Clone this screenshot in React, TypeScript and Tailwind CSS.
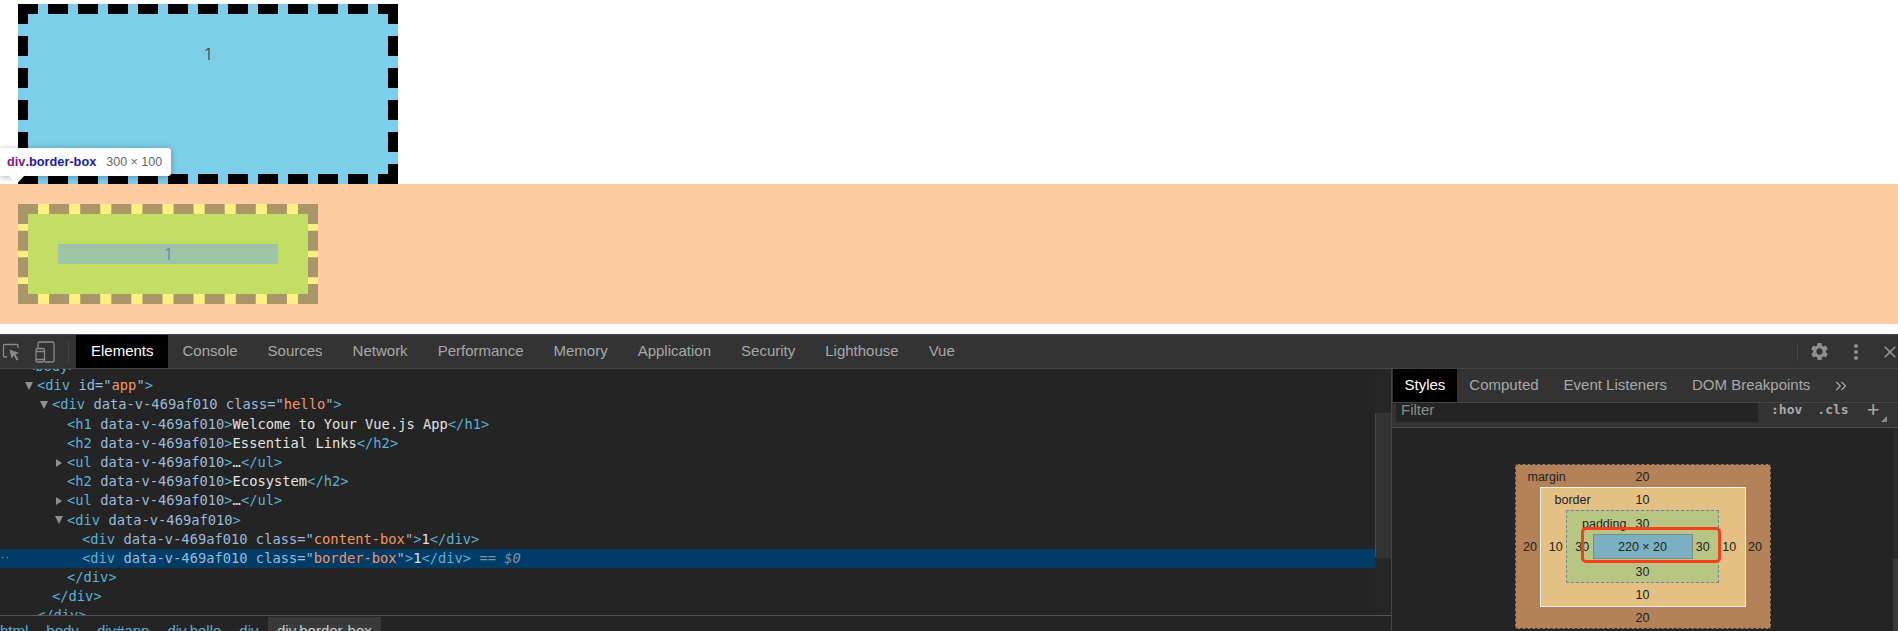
import React from "react";
import { ChevronsRight } from "lucide-react";
import { MdClose, MdMoreVert, MdSettings } from "react-icons/md";

type Token = ["t" | "a" | "v" | "x" | "m", string];

const tokenClass = {
  t: "text-[#5db0d7]",
  a: "text-[#9bbbdc]",
  v: "text-[#f29766]",
  x: "text-[#e3e3e3]",
  m: "text-[#7d8fa3] italic",
};

const ATTR = "data-v-469af010";

const rows: { pad: string; arrow?: "down" | "right"; selected?: boolean; tokens: Token[] }[] = [
  { pad: "pl-[27px]", tokens: [["t", "<body>"]] },
  { pad: "pl-[37px]", arrow: "down", tokens: [["t", "<div "], ["a", 'id="'], ["v", "app"], ["a", '"'], ["t", ">"]] },
  { pad: "pl-[52px]", arrow: "down", tokens: [["t", "<div "], ["a", `${ATTR} class="`], ["v", "hello"], ["a", '"'], ["t", ">"]] },
  { pad: "pl-[67px]", tokens: [["t", "<h1 "], ["a", ATTR], ["t", ">"], ["x", "Welcome to Your Vue.js App"], ["t", "</h1>"]] },
  { pad: "pl-[67px]", tokens: [["t", "<h2 "], ["a", ATTR], ["t", ">"], ["x", "Essential Links"], ["t", "</h2>"]] },
  { pad: "pl-[67px]", arrow: "right", tokens: [["t", "<ul "], ["a", ATTR], ["t", ">"], ["x", "…"], ["t", "</ul>"]] },
  { pad: "pl-[67px]", tokens: [["t", "<h2 "], ["a", ATTR], ["t", ">"], ["x", "Ecosystem"], ["t", "</h2>"]] },
  { pad: "pl-[67px]", arrow: "right", tokens: [["t", "<ul "], ["a", ATTR], ["t", ">"], ["x", "…"], ["t", "</ul>"]] },
  { pad: "pl-[67px]", arrow: "down", tokens: [["t", "<div "], ["a", ATTR], ["t", ">"]] },
  { pad: "pl-[82px]", tokens: [["t", "<div "], ["a", `${ATTR} class="`], ["v", "content-box"], ["a", '"'], ["t", ">"], ["x", "1"], ["t", "</div>"]] },
  { pad: "pl-[82px]", selected: true, tokens: [["t", "<div "], ["a", `${ATTR} class="`], ["v", "border-box"], ["a", '"'], ["t", ">"], ["x", "1"], ["t", "</div>"], ["m", " == $0"]] },
  { pad: "pl-[67px]", tokens: [["t", "</div>"]] },
  { pad: "pl-[52px]", tokens: [["t", "</div>"]] },
  { pad: "pl-[37px]", tokens: [["t", "</div>"]] },
];

const mainTabs = ["Console", "Sources", "Network", "Performance", "Memory", "Application", "Security", "Lighthouse", "Vue"];
const styleTabs = ["Computed", "Event Listeners", "DOM Breakpoints"];
const crumbs = ["html", "body", "div#app", "div.hello", "div"];

function Arrow({ dir }: { dir: "down" | "right" }) {
  return (
    <svg className="-ml-[12px] w-[12px] h-[10px] shrink-0" viewBox="0 0 12 10" fill="#8f8f8f">
      {dir === "down" ? <polygon points="0,1 8,1 4,9" /> : <polygon points="1,1 7,5 1,9" />}
    </svg>
  );
}

function InspectIcon() {
  return (
    <svg className="w-[20px] h-[20px]" viewBox="0 0 20 20" fill="none" stroke="#8a8a8a" strokeWidth="1.3">
      <path d="M7 15H4.5A1 1 0 0 1 3.5 14V3.5A1 1 0 0 1 4.5 2.5H17A1 1 0 0 1 18 3.5V6" />
      <path d="M9.5 7.5L19 11L15.5 12.5L18.5 17.5L16.5 18.5L14 13.5L11.5 16.5Z" fill="#8a8a8a" stroke="none" />
    </svg>
  );
}

function DeviceIcon() {
  return (
    <svg className="w-[20px] h-[22px]" viewBox="0 0 20 22" fill="none" stroke="#8a8a8a" strokeWidth="1.3">
      <path d="M3 7V2.5A1.5 1.5 0 0 1 4.5 1H17.5A1.5 1.5 0 0 1 19 2.5V19.5A1.5 1.5 0 0 1 17.5 21H9.5" />
      <rect x="1" y="7.5" width="8.5" height="13.5" rx="1.5" />
      <path d="M1 10.5H9.5M1 18.5H9.5" />
    </svg>
  );
}

// one nested layer of the box model diagram
function BoxLayer({
  className,
  labelClass,
  label,
  top,
  bottom,
  left,
  right,
  children,
}: {
  className: string;
  labelClass?: string;
  label?: string;
  top: string;
  bottom: string;
  left: string;
  right: string;
  children: React.ReactNode;
}) {
  return (
    <div className={`relative box-border flex flex-col ${className}`}>
      <div className="flex-1 pt-[2px] grid grid-cols-[1fr_auto_1fr] items-center">
        <span className={labelClass}>{label}</span>
        <span>{top}</span>
        <span />
      </div>
      <div className="flex items-center">
        <span className="flex-1 pl-[5px] text-center">{left}</span>
        {children}
        <span className="flex-1 pr-[5px] text-center">{right}</span>
      </div>
      <div className="flex-1 pt-[2px] flex items-center justify-center">{bottom}</div>
    </div>
  );
}

export default function App() {
  return (
    <div className="relative w-[1898px] h-[631px] overflow-hidden flex flex-col bg-white font-['Liberation_Sans',sans-serif]">
      {/* content-box */}
      <div className="h-[184px] pt-[4px] pl-[18px] overflow-hidden shrink-0">
        <div className="box-border w-[380px] h-[180px] border-[10px] border-dashed border-black bg-[#7dcee9] pt-[30px] text-center text-[16px] leading-[20px] font-light text-[#2c3e50] font-['Inter',sans-serif]">
          1
        </div>
      </div>

      {/* border-box with the inspect highlight on it */}
      <div className="h-[140px] py-[20px] pl-[18px] bg-[#fdcca2] shrink-0">
        <div className="box-border w-[300px] h-[100px] border-[10px] border-dashed border-[#ab9669] bg-[#ffee80]">
          <div className="h-full p-[30px] bg-[#c3de65]">
            <div className="h-[20px] bg-[#9cc4a6] text-center text-[16px] leading-[20px] font-light text-[#4f86b4] font-['Inter',sans-serif]">
              1
            </div>
          </div>
        </div>
      </div>

      <div className="h-[10px] shrink-0" />

      {/* tooltip */}
      <div className="absolute left-0 top-[148px] w-[171px] h-[28px] bg-white rounded-r-[3px] shadow-[0_1px_6px_rgba(0,0,0,0.3)] flex items-center pl-[7px] text-[12.75px] whitespace-pre">
        <span className="font-bold text-[#881280]">div</span>
        <span className="font-bold text-[#1a1aa6]">.border-box</span>
        <span className="ml-[10px] text-[12.5px] text-[#666666]">300 × 100</span>
      </div>
      <svg className="absolute left-[9px] top-[176px] w-[15px] h-[8px]" viewBox="0 0 15 8">
        <polygon points="0,0 15,0 7.5,8" fill="#ffffff" />
      </svg>

      {/* devtools */}
      <div className="flex-1 min-h-0 flex flex-col bg-[#242424]">
        <div className="h-[35px] shrink-0 box-border flex items-stretch bg-[#333333] border-t border-[#444444] border-b text-[15px] text-[#a8a8a8]">
          <div className="flex items-center gap-[15px] w-[76px]">
            <InspectIcon />
            <DeviceIcon />
            <div className="w-px h-[20px] -ml-[2px] bg-[#444444]" />
          </div>
          <div className="flex items-center pl-[15px] pr-[14px] bg-black text-white">Elements</div>
          {mainTabs.map((t) => (
            <div key={t} className="flex items-center px-[15px]">
              {t}
            </div>
          ))}
          <div className="ml-auto flex items-center">
            <div className="w-px h-[20px] bg-[#444444] mr-[11px]" />
            <MdSettings className="w-[21px] h-[21px] text-[#8f8f8f]" />
            <MdMoreVert className="w-[24px] h-[24px] ml-[14px] text-[#8f8f8f]" />
            <MdClose className="w-[20px] h-[20px] ml-[12px] -mr-[2px] text-[#8f8f8f]" />
          </div>
        </div>

        <div className="flex-1 min-h-0 flex">
          {/* elements panel */}
          <div className="w-[1392px] shrink-0 flex flex-col border-r border-[#444444]">
            <div className="flex-1 min-h-0 flex">
              <div className="flex-1 min-w-0 overflow-hidden font-['DejaVu_Sans_Mono',monospace] text-[13.75px] leading-[19.2px]">
                <div className="-mt-[12px]">
                  {rows.map((r, i) => (
                    <div
                      key={i}
                      className={`relative h-[19.2px] flex items-center whitespace-pre ${r.pad} ${r.selected ? "bg-[#003c66]" : ""}`}
                    >
                      {r.selected && <span className="absolute left-0 text-[8px] text-[#9a9a9a]">··</span>}
                      {r.arrow && <Arrow dir={r.arrow} />}
                      {r.tokens.map(([k, s], j) => (
                        <span key={j} className={tokenClass[k]}>
                          {s}
                        </span>
                      ))}
                    </div>
                  ))}
                </div>
              </div>
              <div className="w-[16px] shrink-0 bg-[#262626] pt-[44px]">
                <div className="h-[145px] bg-[#333333] border-l border-[#4a4a4a] rounded-l-[2px]" />
              </div>
            </div>
            <div className="h-[16px] shrink-0 box-border border-t border-[#555555] flex text-[15px] leading-[28px] overflow-hidden">
              <div className="flex -ml-[9px] pt-[1px]">
                {crumbs.map((c) => (
                  <span key={c} className="px-[9px] text-[#5db0d7]">
                    {c}
                  </span>
                ))}
                <span className="px-[9.5px] bg-[#3a3a3a] text-[#cfcfcf]">div.border-box</span>
              </div>
            </div>
          </div>

          {/* styles panel */}
          <div className="flex-1 min-w-0 flex flex-col">
            <div className="h-[34px] shrink-0 box-border flex items-stretch bg-[#333333] border-b border-[#444444] text-[15px] text-[#a8a8a8] pl-px">
              <div className="flex items-center px-[11.5px] bg-black text-white">Styles</div>
              {styleTabs.map((t) => (
                <div key={t} className="flex items-center px-[12.5px]">
                  {t}
                </div>
              ))}
              <div className="flex items-center ml-[9px]">
                <ChevronsRight className="w-[18px] h-[18px]" strokeWidth={1.5} />
              </div>
            </div>

            <div className="h-[25px] shrink-0 box-border flex bg-[#333333] border-b border-[#4a4a4a] text-[#a8a8a8] pl-[4px]">
              <div className="w-[362px] h-[19px] bg-[#242424] pl-[5px] text-[15px] leading-[13px] text-[#8c8c8c]">Filter</div>
              <div className="flex-1 flex items-start h-[19px] pl-[13px] font-['DejaVu_Sans_Mono',monospace] font-bold text-[13px] leading-[13px]">
                <span>:hov</span>
                <span className="ml-[15px]">.cls</span>
                <span className="ml-[18px] font-['Liberation_Sans',sans-serif] font-normal text-[22px]">+</span>
                <svg className="ml-[2px] mt-[13px] w-[6px] h-[6px]" viewBox="0 0 6 6">
                  <polygon points="6,0 6,6 0,6" fill="#8a8a8a" />
                </svg>
              </div>
            </div>

            <div className="flex-1 min-h-0 flex overflow-hidden">
              <div className="flex-1 min-w-0 pt-[36px] flex justify-center text-[12.5px] leading-[16px] text-[#222222]">
                <BoxLayer
                  className="w-[256px] h-[165px] shrink-0 border border-dashed border-[#3a3a3a] bg-[#b38258]"
                  labelClass="pl-[12px]"
                  label="margin"
                  top="20"
                  bottom="20"
                  left="20"
                  right="20"
                >
                  <BoxLayer
                    className="w-[206px] h-[120px] shrink-0 border border-[#f0f0f0] bg-[#e5c083]"
                    labelClass="pl-[14px]"
                    label="border"
                    top="10"
                    bottom="10"
                    left="10"
                    right="10"
                  >
                    <BoxLayer
                      className="w-[153px] h-[73px] shrink-0 border border-dashed border-[#7b8296] bg-[#b8c684]"
                      labelClass="pl-[15px]"
                      label="padding"
                      top="30"
                      bottom="30"
                      left="30"
                      right="30"
                    >
                      <div className="box-border w-[100px] h-[25px] shrink-0 border border-[#888888] bg-[#7bb0c0] flex items-center justify-center">
                        220 × 20
                      </div>
                      {/* red frame drawn on the screenshot */}
                      <div className="absolute left-[14px] top-[16px] w-[140px] h-[36px] box-border border-[3px] border-[#f73e1e] rounded-[5px]" />
                    </BoxLayer>
                  </BoxLayer>
                </BoxLayer>
              </div>
              <div className="w-[5px] shrink-0 bg-[#2b2b2b] pt-[131px]">
                <div className="h-full bg-[#3a3a3a]" />
              </div>
            </div>
          </div>
        </div>
      </div>
    </div>
  );
}
